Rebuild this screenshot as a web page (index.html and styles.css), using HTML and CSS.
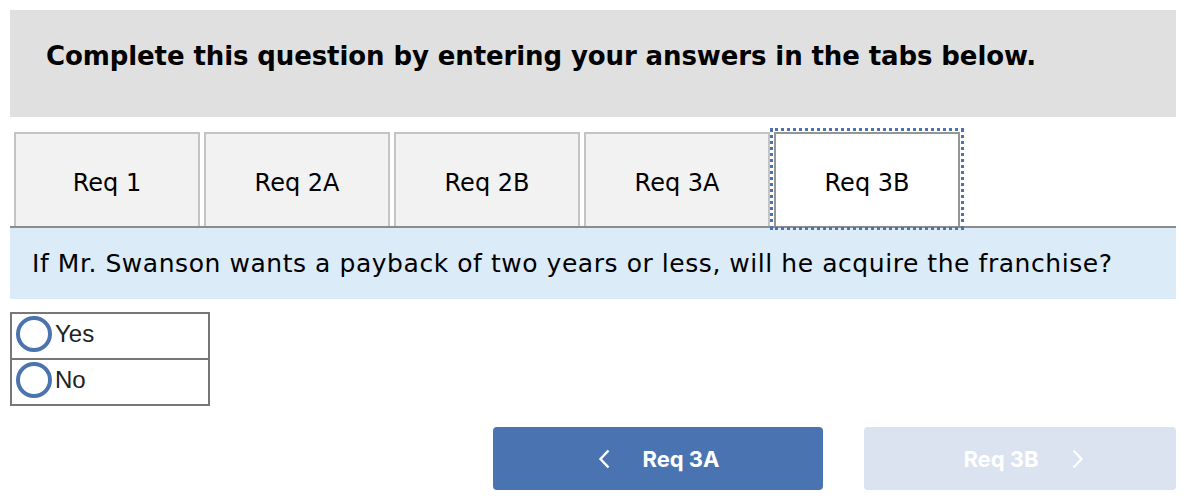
FILE: index.html
```html
<!DOCTYPE html>
<html lang="en">

<head>
    <meta charset="UTF-8">
    <title>Req 3B</title>
    <link rel="stylesheet" href="styles.css">
</head>

<body>
    <div class="question">
        <div class="banner">
            <h1>Complete this question by entering your answers in the tabs below.</h1>
        </div>

        <div class="tabs">
            <div class="tab">Req 1</div>
            <div class="tab">Req 2A</div>
            <div class="tab">Req 2B</div>
            <div class="tab">Req 3A</div>
            <div class="tab active">Req 3B</div>
        </div>

        <div class="prompt">If Mr. Swanson wants a payback of two years or less, will he acquire the franchise?</div>

        <table class="choices">
            <tr>
                <td><span class="radio"></span>Yes</td>
            </tr>
            <tr>
                <td><span class="radio"></span>No</td>
            </tr>
        </table>

        <div class="nav">
            <button type="button" class="nav-btn prev">
                <svg width="14" height="22" viewBox="0 0 14 22"><path d="M11.5 2.5 L3.5 11 L11.5 19.5" fill="none" stroke="#fff" stroke-width="2.4"/></svg>
                <span>Req 3A</span>
            </button>
            <button type="button" class="nav-btn next" disabled>
                <span>Req 3B</span>
                <svg width="14" height="22" viewBox="0 0 14 22"><path d="M2.5 2.5 L10.5 11 L2.5 19.5" fill="none" stroke="#fff" stroke-width="2.4"/></svg>
            </button>
        </div>
    </div>
</body>

</html>
```

FILE: styles.css
```css
/* page */
body {
    margin: 0;
    font-family: "DejaVu Sans", Verdana, sans-serif;
    color: #000;
    background: #fff;
}

.question {
    padding: 10px 12px 10px 10px;
}

/* gray banner */
.banner {
    background: #e0e0e0;
    height: 107px;
    padding: 0 36px;
    display: flex;
    align-items: center;
}

.banner h1 {
    margin: 0 0 16px;
    font-size: 26px;
    font-weight: bold;
    letter-spacing: -0.1px;
}

/* tabs */
.tabs {
    display: flex;
    gap: 4px;
    margin-top: 15px;
    padding-left: 4px;
    border-bottom: 2px solid #8c8c8c;
}

.tab {
    box-sizing: border-box;
    width: 186px;
    height: 94px;
    padding-top: 6px;
    border: 2px solid #c4c4c4;
    border-bottom: none;
    background: #f2f2f2;
    display: flex;
    align-items: center;
    justify-content: center;
    font-size: 24px;
}

.tab.active {
    background: #fff;
    border-color: #969696;
    outline: 3px dotted #4a73b0;
    outline-offset: 1px;
}

/* question text */
.prompt {
    background: #dcebf8;
    height: 71px;
    padding: 0 22px;
    display: flex;
    align-items: center;
    font-size: 25px;
    letter-spacing: 0.55px;
}

/* answer choices */
.choices {
    margin-top: 13px;
    border-collapse: collapse;
    width: 200px;
    font-family: "Liberation Sans", Arial, sans-serif;
    font-size: 24px;
    color: #222;
}

.choices td {
    border: 2px solid #777;
    height: 44px;
    padding: 0 3px 0 4px;
}

.radio {
    display: inline-block;
    width: 28px;
    height: 28px;
    border: 4px solid #4a73b0;
    border-radius: 50%;
    vertical-align: middle;
    margin: -4px 3px 0 0;
}

/* bottom navigation */
.nav {
    display: flex;
    justify-content: flex-end;
    gap: 41px;
    margin-top: 21px;
}

.nav-btn {
    height: 63px;
    border: none;
    border-radius: 4px;
    display: flex;
    align-items: center;
    justify-content: center;
    gap: 32px;
    font-family: Inter, "Liberation Sans", sans-serif;
    font-size: 22px;
    font-weight: bold;
    color: #fff;
}

.prev {
    width: 330px;
    background: #4a74b1;
    padding-right: 6px;
}

.next {
    width: 312px;
    background: #dae3ef;
    padding-left: 14px;
}
```
